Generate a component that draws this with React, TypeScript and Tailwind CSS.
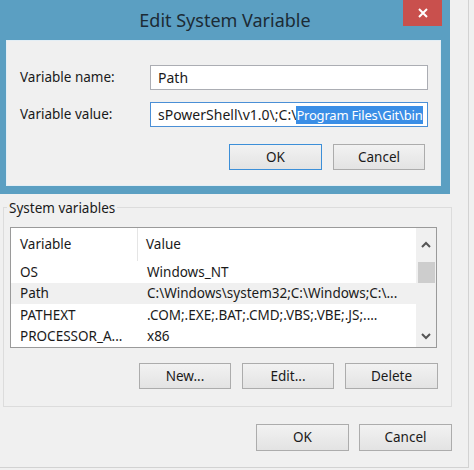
import React from "react";

const font = { fontFamily: '"Noto Sans", "Open Sans", sans-serif' };

function Btn({ label, w, h, focus }: { label: string; w: string; h: string; focus?: boolean }) {
  return (
    <div
      className={`${w} ${h} flex items-center justify-center text-[13.5px] text-[#1a1a1a] border bg-gradient-to-b from-[#f2f2f2] to-[#e3e3e3] ${
        focus ? "border-[#3c8fd8]" : "border-[#acacac]"
      }`}
    >
      {label}
    </div>
  );
}

function ChevronUp() {
  return (
    <svg width="10" height="7" viewBox="0 0 10 7">
      <path d="M1 6 L5 2 L9 6" stroke="#555" strokeWidth="2" fill="none" />
    </svg>
  );
}
function ChevronDown() {
  return (
    <svg width="10" height="7" viewBox="0 0 10 7">
      <path d="M1 1 L5 5 L9 1" stroke="#555" strokeWidth="2" fill="none" />
    </svg>
  );
}

const rows = [
  ["OS", "Windows_NT"],
  ["Path", "C:\\Windows\\system32;C:\\Windows;C:\\..."],
  ["PATHEXT", ".COM;.EXE;.BAT;.CMD;.VBS;.VBE;.JS;...."],
  ["PROCESSOR_A...", "x86"],
];

export default function App() {
  return (
    <div className="relative w-[474px] h-[470px] overflow-hidden bg-[#f0f0f0]" style={font}>
      {/* back window */}
      <div className="w-[469px] h-[468px] border-r border-b border-[#d2d2d2] flex flex-col pt-[207px] pl-[3px]">
        <div className="relative w-[449px] h-[200px] border border-[#dcdcdc] flex flex-col">
          <span className="absolute -top-[9px] left-[3px] px-[2px] bg-[#f0f0f0] text-[13.5px] leading-[18px] text-[#1a1a1a]">
            System variables
          </span>
          <div className="mt-[19px] ml-[6px] w-[427px] h-[121px] border border-[#9a9a9a] bg-white flex overflow-hidden">
            <div className="flex-1 flex flex-col">
              <div className="h-[33px] flex shrink-0 text-[13.5px] text-[#1a1a1a]">
                <div className="w-[127px] border-r border-[#e5e5e5] flex items-center pl-[9px]">Variable</div>
                <div className="flex-1 flex items-center pl-[8px]">Value</div>
              </div>
              {rows.map(([k, v], i) => (
                <div
                  key={k}
                  className={`h-[21.5px] shrink-0 flex items-center text-[13.5px] text-[#1a1a1a] ${
                    i === 1 ? "bg-[#f0f0f0]" : ""
                  }`}
                >
                  <div className="w-[127px] pl-[9px] whitespace-nowrap">{k}</div>
                  <div className="flex-1 pl-[9px] whitespace-nowrap">{v}</div>
                </div>
              ))}
            </div>
            <div className="w-[20px] bg-[#f0f0f0] flex flex-col items-center">
              <div className="h-[33px] flex items-center justify-center">
                <ChevronUp />
              </div>
              <div className="w-[17px] h-[21px] bg-[#cdcdcd] mt-[1px]" />
              <div className="flex-1" />
              <div className="h-[22px] flex items-center justify-center">
                <ChevronDown />
              </div>
            </div>
          </div>
          <div className="mt-[15px] flex gap-[11px] justify-end w-[434px]">
            <Btn label="New..." w="w-[92px]" h="h-[26px]" />
            <Btn label="Edit..." w="w-[92px]" h="h-[26px]" />
            <Btn label="Delete" w="w-[93px]" h="h-[26px]" />
          </div>
        </div>
        <div className="mt-[17px] flex gap-[10px] justify-end w-[449px]">
          <Btn label="OK" w="w-[93px]" h="h-[27px]" />
          <Btn label="Cancel" w="w-[93px]" h="h-[27px]" />
        </div>
      </div>

      {/* foreground dialog */}
      <div className="absolute left-0 top-0 w-[450px] h-[194px] bg-[#5b9fc2] flex flex-col">
        <div className="relative h-[40px] flex items-center justify-center">
          <span className="text-[18px] text-[#1c2b35] leading-none">Edit System Variable</span>
          <div className="absolute top-0 left-[403px] w-[39px] h-[26px] bg-[#c9504d] flex items-center justify-center">
            <svg width="10" height="10" viewBox="0 0 10 10">
              <path d="M1 1 L9 9 M9 1 L1 9" stroke="white" strokeWidth="2" />
            </svg>
          </div>
        </div>
        <div className="ml-[6px] w-[435px] h-[146px] bg-[#f0f0f0] border border-[#e3eef5] flex flex-col pt-[24px] pl-[13px]">
          <div className="flex items-center h-[25px]">
            <div className="w-[130px] text-[13.5px] text-[#1a1a1a]">Variable name:</div>
            <div className="w-[278px] h-[25px] border border-[#abadb3] bg-white flex items-center pl-[7px] text-[14px] text-[#1a1a1a]">
              Path
            </div>
          </div>
          <div className="flex items-center h-[25px] mt-[12px]">
            <div className="w-[130px] text-[13.5px] text-[#1a1a1a]">Variable value:</div>
            <div className="w-[278px] h-[25px] border border-[#4a8fd6] bg-white flex items-center pl-[7px] text-[14px] text-[#1a1a1a] whitespace-nowrap overflow-hidden">
              <span>sPowerShell\v1.0\;C:\</span>
              <span className="bg-[#3a8ee6] text-white text-[13px] tracking-[-0.2px] leading-[18px]">
                Program Files\Git\bin
              </span>
            </div>
          </div>
          <div className="mt-[17px] flex gap-[11px] pl-[209px]">
            <Btn label="OK" w="w-[93px]" h="h-[26px]" focus />
            <Btn label="Cancel" w="w-[92px]" h="h-[26px]" />
          </div>
        </div>
      </div>
    </div>
  );
}
